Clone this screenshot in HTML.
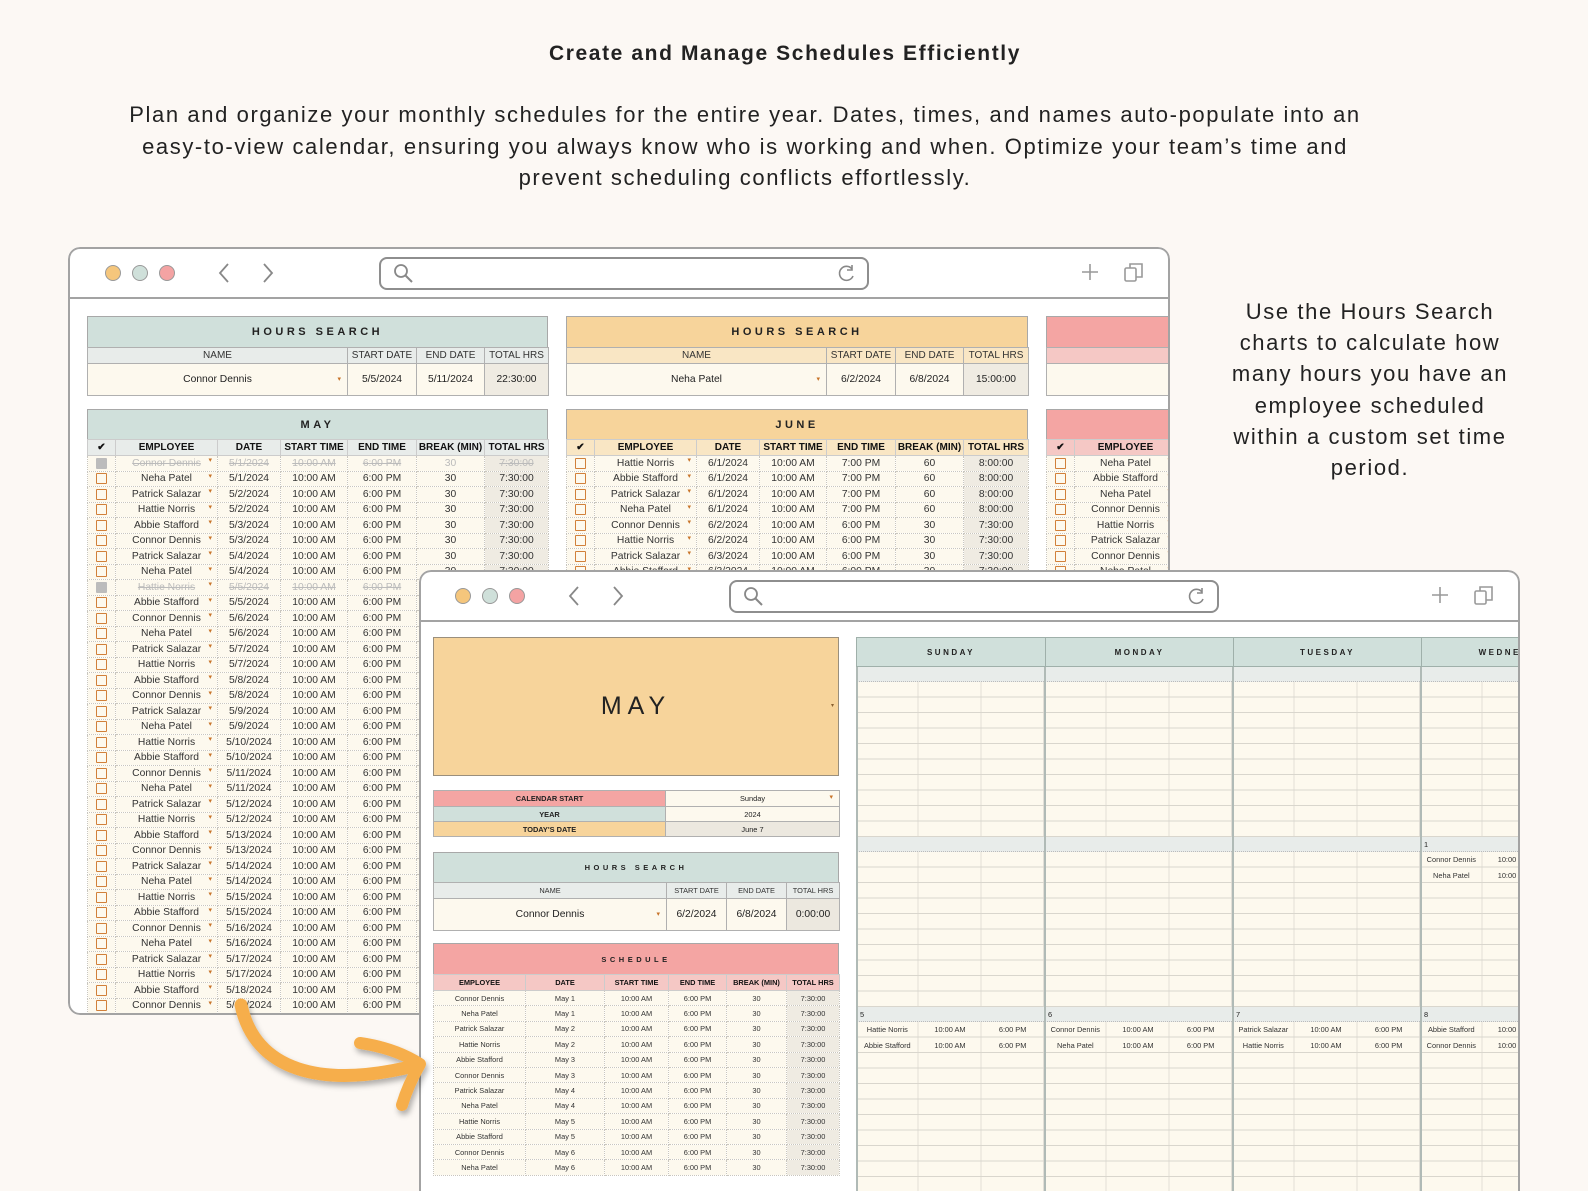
<!DOCTYPE html>
<html><head><meta charset="utf-8">
<style>
*{box-sizing:border-box;margin:0;padding:0}
html{width:1588px;height:1191px;overflow:hidden}
body{width:1588px;height:1191px;overflow:hidden;background:#fcf8f4;font-family:"Liberation Sans",sans-serif;color:#222;position:relative}
.h1{position:absolute;top:42px;left:0;width:1570px;text-align:center;font-weight:bold;font-size:21px;letter-spacing:1.6px}
.p{position:absolute;top:99px;left:0;width:1490px;text-align:center;font-size:22px;line-height:31.5px;letter-spacing:1.6px;color:#222;white-space:nowrap}
.side{position:absolute;top:296px;left:1222px;width:296px;text-align:center;font-size:22px;line-height:31.2px;letter-spacing:1.6px}
.win{position:absolute;background:#fff;overflow:hidden;border-radius:12px;z-index:1}
.win:after{content:"";position:absolute;inset:0;border:2px solid #a3a3a3;border-radius:12px;pointer-events:none;z-index:5}
.w2:after{border-bottom:none;border-radius:12px 12px 0 0}
.tb{position:absolute;left:0;top:0;right:0;height:52px;border-bottom:2px solid #a3a3a3;background:#fff}
.dot{position:absolute;top:18px;width:16px;height:16px;border-radius:50%;border:1.5px solid #999}
.chev{position:absolute;top:15px;width:12px;height:22px}
.srch{position:absolute;top:10px;height:33px;width:490px;border:2px solid #8e8e8e;border-radius:8px}
.abs{position:absolute}
table{border-collapse:collapse;table-layout:fixed;position:absolute}
td{padding:0;text-align:center;white-space:nowrap;overflow:hidden;position:relative}
.ttl{position:absolute;height:31px;font-weight:bold;font-size:11px;letter-spacing:3.5px;text-align:center;line-height:31px;border:1px solid #a8a8a8;border-bottom:none}
.t1 td{height:15.5px;font-size:10.3px;border:1px dotted #c9c6be;color:#333;background:#fdf9ee}
.t1 tr.hd td{font-weight:bold;font-size:10px;background:#e8ecea;color:#111;height:16px;border:1px solid #ccc}
.t1 td:last-child{background:#efebe2}
.t1 tr.hd td:last-child{background:#e8ecea}
.t1 td b{position:absolute;right:5px;top:0;font-size:7px;color:#c8742a;font-weight:normal}
.t1 td.x{color:#bbb;text-decoration:line-through}
.c{display:inline-block;width:11px;height:11px;border:1.6px solid #d1803a;vertical-align:middle;border-radius:1px}
.k{display:inline-block;width:11px;height:11px;background:#bcbcbc;vertical-align:middle;border-radius:1px}
.hs td{border:1px solid #b0b0b0;font-size:10px}
.hs tr.s td{height:16px;background:#e8ecea;color:#333}
.hs tr.v td{height:32px;background:#fdf9ee;font-size:10.3px}
.hs td b{position:absolute;right:6px;top:11px;font-size:7px;color:#c8742a;font-weight:normal}
.w2 .t1 td{height:15.4px;font-size:7.4px}
.w2 .t1 tr.hd td{font-size:7.4px;height:16px}
.w2 .hs td{font-size:7.4px}
.cal{position:absolute;left:437px;top:67px;width:664px;height:554px;overflow:hidden}
.cal .hdr{position:absolute;left:0;top:0;width:760px;height:30px;background:#d0e0db;border:1px solid #9fb0aa}
.cal .hdr span{position:absolute;top:0;width:188px;height:29px;text-align:center;line-height:29px;font-size:8px;font-weight:bold;letter-spacing:2.5px;border-left:1.5px solid #9fb0aa}
.wk{position:absolute;left:0;width:760px;height:170px}
.dr{position:absolute;left:0;top:0;width:100%;height:15px;background:#e8ecea;border-bottom:1px dotted #bbb}
.bd{position:absolute;left:0;top:15px;width:100%;height:155px;background-color:#fdf9ee;background-image:repeating-linear-gradient(to bottom,transparent 0 14.5px,#d9d6cd 14.5px 15.5px),repeating-linear-gradient(to right,transparent 0 61.67px,#e2dfd7 61.67px 62.67px)}
.vl{position:absolute;top:0;width:1.5px;height:554px;background:#b0bab6}
.ct{position:absolute;width:62.67px;text-align:center;font-size:7.4px;color:#333;line-height:15px;white-space:nowrap}
.dn{position:absolute;font-size:7.4px;line-height:15px}
</style></head><body>
<div class="h1">Create and Manage Schedules Efficiently</div>
<div class="p">Plan and organize your monthly schedules for the entire year. Dates, times, and names auto-populate into an<br>easy-to-view calendar, ensuring you always know who is working and when. Optimize your team’s time and<br>prevent scheduling conflicts effortlessly.</div>
<div class="side">Use the Hours Search charts to calculate how many hours you have an employee scheduled within a custom set time period.</div>

<!-- WINDOW 1 -->
<div class="win" style="left:68px;top:247px;width:1102px;height:768px">
<div class="tb">
<div class="dot" style="left:37px;background:#f5c67c"></div>
<div class="dot" style="left:64px;background:#cfe0da"></div>
<div class="dot" style="left:91px;background:#f4a3a3"></div>
<svg class="chev" style="left:150px" viewBox="0 0 12 22"><path d="M10 2 L2 11 L10 20" fill="none" stroke="#888" stroke-width="1.8"/></svg>
<svg class="chev" style="left:194px" viewBox="0 0 12 22"><path d="M2 2 L10 11 L2 20" fill="none" stroke="#888" stroke-width="1.8"/></svg>
<div class="srch" style="left:311px"><svg class="abs" style="left:12px;top:4px" width="22" height="22" viewBox="0 0 22 22"><circle cx="8" cy="8" r="6" fill="none" stroke="#888" stroke-width="1.8"/><path d="M12.5 12.5 L19 19" stroke="#888" stroke-width="2"/></svg><svg class="abs" style="left:456px;top:5px" width="20" height="20" viewBox="0 0 20 20"><path d="M15 5 A7 7 0 1 0 16 12" fill="none" stroke="#888" stroke-width="1.6"/><path d="M15 1 L15 6 L10 6" fill="none" stroke="#888" stroke-width="1.6"/></svg></div>
<svg class="abs" style="left:1013px;top:16px" width="18" height="18" viewBox="0 0 18 18"><path d="M9 1V17M1 9H17" stroke="#999" stroke-width="1.6"/></svg>
<svg class="abs" style="left:1055px;top:14px" width="22" height="22" viewBox="0 0 22 22"><rect x="2" y="7" width="11" height="13" rx="1.5" fill="#fff" stroke="#999" stroke-width="1.6"/><path d="M7 7V3h12v13h-6" fill="none" stroke="#999" stroke-width="1.6"/></svg>
</div>

<div class="ttl" style="left:19px;top:69px;width:461px;background:#d0e0db">HOURS SEARCH</div>
<table class="hs" style="left:19px;top:100px;width:461px"><colgroup><col style="width:260px"><col style="width:69px"><col style="width:68px"><col style="width:64px"></colgroup>
<tr class="s"><td>NAME</td><td>START DATE</td><td>END DATE</td><td>TOTAL HRS</td></tr>
<tr class="v"><td>Connor Dennis<b>▾</b></td><td>5/5/2024</td><td>5/11/2024</td><td style="background:#efebe2">22:30:00</td></tr></table>

<div class="ttl" style="left:498px;top:69px;width:462px;background:#f7d49b">HOURS SEARCH</div>
<table class="hs" style="left:498px;top:100px;width:462px"><colgroup><col style="width:260px"><col style="width:69px"><col style="width:68px"><col style="width:65px"></colgroup>
<tr class="s" ><td style="background:#f9e6c4">NAME</td><td style="background:#f9e6c4">START DATE</td><td style="background:#f9e6c4">END DATE</td><td style="background:#f9e6c4">TOTAL HRS</td></tr>
<tr class="v"><td>Neha Patel<b>▾</b></td><td>6/2/2024</td><td>6/8/2024</td><td style="background:#efebe2">15:00:00</td></tr></table>

<div class="ttl" style="left:978px;top:69px;width:461px;background:#f4a5a3">&nbsp;</div>
<table class="hs" style="left:978px;top:100px;width:461px"><colgroup><col style="width:260px"><col style="width:69px"><col style="width:68px"><col style="width:64px"></colgroup>
<tr class="s"><td style="background:#f5c8c5;text-align:right;padding-right:0">N</td><td></td><td></td><td></td></tr>
<tr class="v"><td></td><td></td><td></td><td></td></tr></table>

<div class="ttl" style="left:19px;top:162px;width:461px;background:#d0e0db">MAY</div>
<table class="t1" style="left:19px;top:192px;width:461px"><colgroup><col style="width:28px"><col style="width:102px"><col style="width:63px"><col style="width:67px"><col style="width:69px"><col style="width:68px"><col style="width:64px"></colgroup>
<tr class="hd"><td>✔</td><td>EMPLOYEE</td><td>DATE</td><td>START TIME</td><td>END TIME</td><td>BREAK (MIN)</td><td>TOTAL HRS</td></tr>
<tr><td><i class="k"></i></td><td class="x">Connor Dennis<b>▾</b></td><td class="x">5/1/2024</td><td class="x">10:00 AM</td><td class="x">6:00 PM</td><td class="x" style="text-decoration:none">30</td><td class="x">7:30:00</td></tr>
<tr><td><i class="c"></i></td><td>Neha Patel<b>▾</b></td><td>5/1/2024</td><td>10:00 AM</td><td>6:00 PM</td><td>30</td><td>7:30:00</td></tr>
<tr><td><i class="c"></i></td><td>Patrick Salazar<b>▾</b></td><td>5/2/2024</td><td>10:00 AM</td><td>6:00 PM</td><td>30</td><td>7:30:00</td></tr>
<tr><td><i class="c"></i></td><td>Hattie Norris<b>▾</b></td><td>5/2/2024</td><td>10:00 AM</td><td>6:00 PM</td><td>30</td><td>7:30:00</td></tr>
<tr><td><i class="c"></i></td><td>Abbie Stafford<b>▾</b></td><td>5/3/2024</td><td>10:00 AM</td><td>6:00 PM</td><td>30</td><td>7:30:00</td></tr>
<tr><td><i class="c"></i></td><td>Connor Dennis<b>▾</b></td><td>5/3/2024</td><td>10:00 AM</td><td>6:00 PM</td><td>30</td><td>7:30:00</td></tr>
<tr><td><i class="c"></i></td><td>Patrick Salazar<b>▾</b></td><td>5/4/2024</td><td>10:00 AM</td><td>6:00 PM</td><td>30</td><td>7:30:00</td></tr>
<tr><td><i class="c"></i></td><td>Neha Patel<b>▾</b></td><td>5/4/2024</td><td>10:00 AM</td><td>6:00 PM</td><td>30</td><td>7:30:00</td></tr>
<tr><td><i class="k"></i></td><td class="x">Hattie Norris<b>▾</b></td><td class="x">5/5/2024</td><td class="x">10:00 AM</td><td class="x">6:00 PM</td><td>30</td><td>7:30:00</td></tr>
<tr><td><i class="c"></i></td><td>Abbie Stafford<b>▾</b></td><td>5/5/2024</td><td>10:00 AM</td><td>6:00 PM</td><td>30</td><td>7:30:00</td></tr>
<tr><td><i class="c"></i></td><td>Connor Dennis<b>▾</b></td><td>5/6/2024</td><td>10:00 AM</td><td>6:00 PM</td><td>30</td><td>7:30:00</td></tr>
<tr><td><i class="c"></i></td><td>Neha Patel<b>▾</b></td><td>5/6/2024</td><td>10:00 AM</td><td>6:00 PM</td><td>30</td><td>7:30:00</td></tr>
<tr><td><i class="c"></i></td><td>Patrick Salazar<b>▾</b></td><td>5/7/2024</td><td>10:00 AM</td><td>6:00 PM</td><td>30</td><td>7:30:00</td></tr>
<tr><td><i class="c"></i></td><td>Hattie Norris<b>▾</b></td><td>5/7/2024</td><td>10:00 AM</td><td>6:00 PM</td><td>30</td><td>7:30:00</td></tr>
<tr><td><i class="c"></i></td><td>Abbie Stafford<b>▾</b></td><td>5/8/2024</td><td>10:00 AM</td><td>6:00 PM</td><td>30</td><td>7:30:00</td></tr>
<tr><td><i class="c"></i></td><td>Connor Dennis<b>▾</b></td><td>5/8/2024</td><td>10:00 AM</td><td>6:00 PM</td><td>30</td><td>7:30:00</td></tr>
<tr><td><i class="c"></i></td><td>Patrick Salazar<b>▾</b></td><td>5/9/2024</td><td>10:00 AM</td><td>6:00 PM</td><td>30</td><td>7:30:00</td></tr>
<tr><td><i class="c"></i></td><td>Neha Patel<b>▾</b></td><td>5/9/2024</td><td>10:00 AM</td><td>6:00 PM</td><td>30</td><td>7:30:00</td></tr>
<tr><td><i class="c"></i></td><td>Hattie Norris<b>▾</b></td><td>5/10/2024</td><td>10:00 AM</td><td>6:00 PM</td><td>30</td><td>7:30:00</td></tr>
<tr><td><i class="c"></i></td><td>Abbie Stafford<b>▾</b></td><td>5/10/2024</td><td>10:00 AM</td><td>6:00 PM</td><td>30</td><td>7:30:00</td></tr>
<tr><td><i class="c"></i></td><td>Connor Dennis<b>▾</b></td><td>5/11/2024</td><td>10:00 AM</td><td>6:00 PM</td><td>30</td><td>7:30:00</td></tr>
<tr><td><i class="c"></i></td><td>Neha Patel<b>▾</b></td><td>5/11/2024</td><td>10:00 AM</td><td>6:00 PM</td><td>30</td><td>7:30:00</td></tr>
<tr><td><i class="c"></i></td><td>Patrick Salazar<b>▾</b></td><td>5/12/2024</td><td>10:00 AM</td><td>6:00 PM</td><td>30</td><td>7:30:00</td></tr>
<tr><td><i class="c"></i></td><td>Hattie Norris<b>▾</b></td><td>5/12/2024</td><td>10:00 AM</td><td>6:00 PM</td><td>30</td><td>7:30:00</td></tr>
<tr><td><i class="c"></i></td><td>Abbie Stafford<b>▾</b></td><td>5/13/2024</td><td>10:00 AM</td><td>6:00 PM</td><td>30</td><td>7:30:00</td></tr>
<tr><td><i class="c"></i></td><td>Connor Dennis<b>▾</b></td><td>5/13/2024</td><td>10:00 AM</td><td>6:00 PM</td><td>30</td><td>7:30:00</td></tr>
<tr><td><i class="c"></i></td><td>Patrick Salazar<b>▾</b></td><td>5/14/2024</td><td>10:00 AM</td><td>6:00 PM</td><td>30</td><td>7:30:00</td></tr>
<tr><td><i class="c"></i></td><td>Neha Patel<b>▾</b></td><td>5/14/2024</td><td>10:00 AM</td><td>6:00 PM</td><td>30</td><td>7:30:00</td></tr>
<tr><td><i class="c"></i></td><td>Hattie Norris<b>▾</b></td><td>5/15/2024</td><td>10:00 AM</td><td>6:00 PM</td><td>30</td><td>7:30:00</td></tr>
<tr><td><i class="c"></i></td><td>Abbie Stafford<b>▾</b></td><td>5/15/2024</td><td>10:00 AM</td><td>6:00 PM</td><td>30</td><td>7:30:00</td></tr>
<tr><td><i class="c"></i></td><td>Connor Dennis<b>▾</b></td><td>5/16/2024</td><td>10:00 AM</td><td>6:00 PM</td><td>30</td><td>7:30:00</td></tr>
<tr><td><i class="c"></i></td><td>Neha Patel<b>▾</b></td><td>5/16/2024</td><td>10:00 AM</td><td>6:00 PM</td><td>30</td><td>7:30:00</td></tr>
<tr><td><i class="c"></i></td><td>Patrick Salazar<b>▾</b></td><td>5/17/2024</td><td>10:00 AM</td><td>6:00 PM</td><td>30</td><td>7:30:00</td></tr>
<tr><td><i class="c"></i></td><td>Hattie Norris<b>▾</b></td><td>5/17/2024</td><td>10:00 AM</td><td>6:00 PM</td><td>30</td><td>7:30:00</td></tr>
<tr><td><i class="c"></i></td><td>Abbie Stafford<b>▾</b></td><td>5/18/2024</td><td>10:00 AM</td><td>6:00 PM</td><td>30</td><td>7:30:00</td></tr>
<tr><td><i class="c"></i></td><td>Connor Dennis<b>▾</b></td><td>5/18/2024</td><td>10:00 AM</td><td>6:00 PM</td><td>30</td><td>7:30:00</td></tr>
</table>

<div class="ttl" style="left:498px;top:162px;width:462px;background:#f7d49b">JUNE</div>
<table class="t1" style="left:498px;top:192px;width:462px"><colgroup><col style="width:28px"><col style="width:102px"><col style="width:63px"><col style="width:67px"><col style="width:69px"><col style="width:68px"><col style="width:65px"></colgroup>
<tr class="hd"><td style="background:#f9e6c4">✔</td><td style="background:#f9e6c4">EMPLOYEE</td><td style="background:#f9e6c4">DATE</td><td style="background:#f9e6c4">START TIME</td><td style="background:#f9e6c4">END TIME</td><td style="background:#f9e6c4">BREAK (MIN)</td><td style="background:#f9e6c4">TOTAL HRS</td></tr>
<tr><td><i class="c"></i></td><td>Hattie Norris<b>▾</b></td><td>6/1/2024</td><td>10:00 AM</td><td>7:00 PM</td><td>60</td><td>8:00:00</td></tr>
<tr><td><i class="c"></i></td><td>Abbie Stafford<b>▾</b></td><td>6/1/2024</td><td>10:00 AM</td><td>7:00 PM</td><td>60</td><td>8:00:00</td></tr>
<tr><td><i class="c"></i></td><td>Patrick Salazar<b>▾</b></td><td>6/1/2024</td><td>10:00 AM</td><td>7:00 PM</td><td>60</td><td>8:00:00</td></tr>
<tr><td><i class="c"></i></td><td>Neha Patel<b>▾</b></td><td>6/1/2024</td><td>10:00 AM</td><td>7:00 PM</td><td>60</td><td>8:00:00</td></tr>
<tr><td><i class="c"></i></td><td>Connor Dennis<b>▾</b></td><td>6/2/2024</td><td>10:00 AM</td><td>6:00 PM</td><td>30</td><td>7:30:00</td></tr>
<tr><td><i class="c"></i></td><td>Hattie Norris<b>▾</b></td><td>6/2/2024</td><td>10:00 AM</td><td>6:00 PM</td><td>30</td><td>7:30:00</td></tr>
<tr><td><i class="c"></i></td><td>Patrick Salazar<b>▾</b></td><td>6/3/2024</td><td>10:00 AM</td><td>6:00 PM</td><td>30</td><td>7:30:00</td></tr>
<tr><td><i class="c"></i></td><td>Abbie Stafford<b>▾</b></td><td>6/3/2024</td><td>10:00 AM</td><td>6:00 PM</td><td>30</td><td>7:30:00</td></tr>
</table>

<div class="ttl" style="left:978px;top:162px;width:461px;background:#f4a5a3">&nbsp;</div>
<table class="t1" style="left:978px;top:192px;width:461px"><colgroup><col style="width:28px"><col style="width:102px"><col style="width:63px"><col style="width:67px"><col style="width:69px"><col style="width:68px"><col style="width:64px"></colgroup>
<tr class="hd"><td style="background:#f5c8c5">✔</td><td style="background:#f5c8c5">EMPLOYEE</td><td></td><td></td><td></td><td></td><td></td></tr>
<tr><td><i class="c"></i></td><td>Neha Patel<b>▾</b></td><td></td><td></td><td></td><td></td><td></td></tr>
<tr><td><i class="c"></i></td><td>Abbie Stafford<b>▾</b></td><td></td><td></td><td></td><td></td><td></td></tr>
<tr><td><i class="c"></i></td><td>Neha Patel<b>▾</b></td><td></td><td></td><td></td><td></td><td></td></tr>
<tr><td><i class="c"></i></td><td>Connor Dennis<b>▾</b></td><td></td><td></td><td></td><td></td><td></td></tr>
<tr><td><i class="c"></i></td><td>Hattie Norris<b>▾</b></td><td></td><td></td><td></td><td></td><td></td></tr>
<tr><td><i class="c"></i></td><td>Patrick Salazar<b>▾</b></td><td></td><td></td><td></td><td></td><td></td></tr>
<tr><td><i class="c"></i></td><td>Connor Dennis<b>▾</b></td><td></td><td></td><td></td><td></td><td></td></tr>
<tr><td><i class="c"></i></td><td>Neha Patel<b>▾</b></td><td></td><td></td><td></td><td></td><td></td></tr>
</table>
</div>

<!-- WINDOW 2 -->
<div class="win w2" style="left:419px;top:570px;width:1101px;height:621px;z-index:2;border-radius:12px 12px 0 0">
<div class="tb">
<div class="dot" style="left:36px;background:#f5c67c"></div>
<div class="dot" style="left:63px;background:#cfe0da"></div>
<div class="dot" style="left:90px;background:#f4a3a3"></div>
<svg class="chev" style="left:149px" viewBox="0 0 12 22"><path d="M10 2 L2 11 L10 20" fill="none" stroke="#888" stroke-width="1.8"/></svg>
<svg class="chev" style="left:193px" viewBox="0 0 12 22"><path d="M2 2 L10 11 L2 20" fill="none" stroke="#888" stroke-width="1.8"/></svg>
<div class="srch" style="left:310px"><svg class="abs" style="left:12px;top:4px" width="22" height="22" viewBox="0 0 22 22"><circle cx="8" cy="8" r="6" fill="none" stroke="#888" stroke-width="1.8"/><path d="M12.5 12.5 L19 19" stroke="#888" stroke-width="2"/></svg><svg class="abs" style="left:456px;top:5px" width="20" height="20" viewBox="0 0 20 20"><path d="M15 5 A7 7 0 1 0 16 12" fill="none" stroke="#888" stroke-width="1.6"/><path d="M15 1 L15 6 L10 6" fill="none" stroke="#888" stroke-width="1.6"/></svg></div>
<svg class="abs" style="left:1012px;top:16px" width="18" height="18" viewBox="0 0 18 18"><path d="M9 1V17M1 9H17" stroke="#999" stroke-width="1.6"/></svg>
<svg class="abs" style="left:1054px;top:14px" width="22" height="22" viewBox="0 0 22 22"><rect x="2" y="7" width="11" height="13" rx="1.5" fill="#fff" stroke="#999" stroke-width="1.6"/><path d="M7 7V3h12v13h-6" fill="none" stroke="#999" stroke-width="1.6"/></svg>
</div>

<div class="abs" style="left:14px;top:67px;width:406px;height:139px;background:#f7d49b;border:1.5px solid #9a8f7d;text-align:center;line-height:136px;font-size:25px;letter-spacing:6px">MAY<span style="position:absolute;right:4px;top:0;font-size:6px;letter-spacing:0;color:#8a6030">▾</span></div>

<table class="hs" style="left:14px;top:220px;width:406px"><colgroup><col style="width:232px"><col style="width:174px"></colgroup>
<tr><td style="height:16px;background:#f4a5a3;font-size:7.4px;font-weight:bold">CALENDAR START</td><td style="background:#fdf9ee;font-size:7.4px">Sunday<b style="top:2px">▾</b></td></tr>
<tr><td style="height:15px;background:#d0e0db;font-size:7.4px;font-weight:bold">YEAR</td><td style="background:#fdf9ee;font-size:7.4px">2024</td></tr>
<tr><td style="height:15px;background:#f7d49b;font-size:7.4px;font-weight:bold">TODAY'S DATE</td><td style="background:#ece8df;font-size:7.4px">June 7</td></tr></table>

<div class="ttl" style="left:14px;top:282px;width:406px;background:#d0e0db;font-size:7.5px;height:30px;line-height:30px">HOURS SEARCH</div>
<table class="hs" style="left:14px;top:312px;width:406px"><colgroup><col style="width:233px"><col style="width:60px"><col style="width:60px"><col style="width:53px"></colgroup>
<tr class="s"><td>NAME</td><td>START DATE</td><td>END DATE</td><td>TOTAL HRS</td></tr>
<tr class="v"><td style="height:30px">Connor Dennis<b>▾</b></td><td>6/2/2024</td><td>6/8/2024</td><td style="background:#ece8df">0:00:00</td></tr></table>

<div class="ttl" style="left:14px;top:373px;width:406px;background:#f4a5a3;font-size:7.5px;height:31px">SCHEDULE</div>
<table class="t1" style="left:14px;top:404px;width:406px"><colgroup><col style="width:92px"><col style="width:79px"><col style="width:64px"><col style="width:58px"><col style="width:60px"><col style="width:53px"></colgroup>
<tr class="hd"><td style="background:#f5c8c5">EMPLOYEE</td><td style="background:#f5c8c5">DATE</td><td style="background:#f5c8c5">START TIME</td><td style="background:#f5c8c5">END TIME</td><td style="background:#f5c8c5">BREAK (MIN)</td><td style="background:#f5c8c5">TOTAL HRS</td></tr>
<tr><td>Connor Dennis</td><td>May 1</td><td>10:00 AM</td><td>6:00 PM</td><td>30</td><td>7:30:00</td></tr>
<tr><td>Neha Patel</td><td>May 1</td><td>10:00 AM</td><td>6:00 PM</td><td>30</td><td>7:30:00</td></tr>
<tr><td>Patrick Salazar</td><td>May 2</td><td>10:00 AM</td><td>6:00 PM</td><td>30</td><td>7:30:00</td></tr>
<tr><td>Hattie Norris</td><td>May 2</td><td>10:00 AM</td><td>6:00 PM</td><td>30</td><td>7:30:00</td></tr>
<tr><td>Abbie Stafford</td><td>May 3</td><td>10:00 AM</td><td>6:00 PM</td><td>30</td><td>7:30:00</td></tr>
<tr><td>Connor Dennis</td><td>May 3</td><td>10:00 AM</td><td>6:00 PM</td><td>30</td><td>7:30:00</td></tr>
<tr><td>Patrick Salazar</td><td>May 4</td><td>10:00 AM</td><td>6:00 PM</td><td>30</td><td>7:30:00</td></tr>
<tr><td>Neha Patel</td><td>May 4</td><td>10:00 AM</td><td>6:00 PM</td><td>30</td><td>7:30:00</td></tr>
<tr><td>Hattie Norris</td><td>May 5</td><td>10:00 AM</td><td>6:00 PM</td><td>30</td><td>7:30:00</td></tr>
<tr><td>Abbie Stafford</td><td>May 5</td><td>10:00 AM</td><td>6:00 PM</td><td>30</td><td>7:30:00</td></tr>
<tr><td>Connor Dennis</td><td>May 6</td><td>10:00 AM</td><td>6:00 PM</td><td>30</td><td>7:30:00</td></tr>
<tr><td>Neha Patel</td><td>May 6</td><td>10:00 AM</td><td>6:00 PM</td><td>30</td><td>7:30:00</td></tr>
</table>

<div class="cal">
<div class="wk" style="top:30px"><div class="dr"></div><div class="bd"></div></div>
<div class="wk" style="top:200px"><div class="dr"></div><div class="bd"></div></div>
<div class="wk" style="top:370px;height:184px"><div class="dr"></div><div class="bd" style="height:169px"></div></div>
<div class="vl" style="left:0"></div><div class="vl" style="left:188px"></div><div class="vl" style="left:376px"></div><div class="vl" style="left:564px"></div>
<div class="hdr"><span style="left:0;border-left:none">SUNDAY</span><span style="left:188px">MONDAY</span><span style="left:376px">TUESDAY</span><span style="left:564px">WEDNESDAY</span></div>

<div class="dn" style="left:568px;top:200px">1</div>
<div class="ct" style="left:564px;top:215px">Connor Dennis</div><div class="ct" style="left:626px;top:215px">10:00 AM</div>
<div class="ct" style="left:564px;top:230.5px">Neha Patel</div><div class="ct" style="left:626px;top:230.5px">10:00 AM</div>

<div class="dn" style="left:4px;top:370px">5</div>
<div class="ct" style="left:0;top:385px">Hattie Norris</div><div class="ct" style="left:62.67px;top:385px">10:00 AM</div><div class="ct" style="left:125.3px;top:385px">6:00 PM</div>
<div class="ct" style="left:0;top:400.5px">Abbie Stafford</div><div class="ct" style="left:62.67px;top:400.5px">10:00 AM</div><div class="ct" style="left:125.3px;top:400.5px">6:00 PM</div>
<div class="dn" style="left:192px;top:370px">6</div>
<div class="ct" style="left:188px;top:385px">Connor Dennis</div><div class="ct" style="left:250.67px;top:385px">10:00 AM</div><div class="ct" style="left:313.3px;top:385px">6:00 PM</div>
<div class="ct" style="left:188px;top:400.5px">Neha Patel</div><div class="ct" style="left:250.67px;top:400.5px">10:00 AM</div><div class="ct" style="left:313.3px;top:400.5px">6:00 PM</div>
<div class="dn" style="left:380px;top:370px">7</div>
<div class="ct" style="left:376px;top:385px">Patrick Salazar</div><div class="ct" style="left:438.67px;top:385px">10:00 AM</div><div class="ct" style="left:501.3px;top:385px">6:00 PM</div>
<div class="ct" style="left:376px;top:400.5px">Hattie Norris</div><div class="ct" style="left:438.67px;top:400.5px">10:00 AM</div><div class="ct" style="left:501.3px;top:400.5px">6:00 PM</div>
<div class="dn" style="left:568px;top:370px">8</div>
<div class="ct" style="left:564px;top:385px">Abbie Stafford</div><div class="ct" style="left:626px;top:385px">10:00 AM</div>
<div class="ct" style="left:564px;top:400.5px">Connor Dennis</div><div class="ct" style="left:626px;top:400.5px">10:00 AM</div>
</div>
</div>

<svg class="abs" style="left:0;top:0;z-index:10" width="1588" height="1191" viewBox="0 0 1588 1191">
<defs><filter id="sh" x="-20%" y="-20%" width="140%" height="140%"><feDropShadow dx="2" dy="4" stdDeviation="3" flood-color="#000" flood-opacity="0.3"/></filter></defs>
<g filter="url(#sh)" fill="none" stroke="#f6ae4c" stroke-linecap="round" stroke-linejoin="round">
<path d="M241 1005 C 255 1070 320 1090 418 1065" stroke-width="13"/>
<path d="M360 1043 Q 395 1048 420 1064 Q 408 1085 402 1105" stroke-width="12"/>
</g></svg>
</body></html>
